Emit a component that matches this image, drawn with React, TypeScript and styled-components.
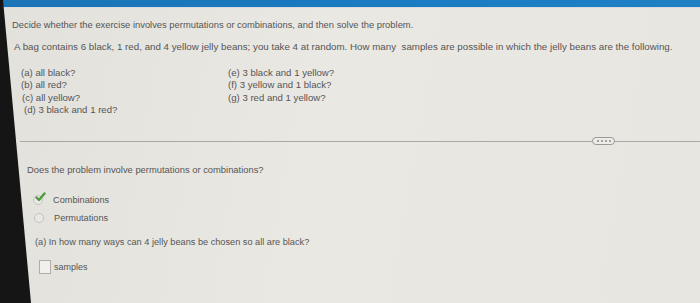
import React from "react";
import styled, { createGlobalStyle } from "styled-components";

const GlobalStyle = createGlobalStyle`
  html, body {
    margin: 0;
    padding: 0;
    background: #e7e5e0;
  }
  * {
    box-sizing: border-box;
  }
`;

// whole photographed screen
const Screen = styled.div`
  position: relative;
  width: 700px;
  height: 303px;
  overflow: hidden;
  background: linear-gradient(100deg, #e3e1dc 0%, #eae8e3 45%, #e8e6e1 100%);
  font-family: "Liberation Sans", Arial, sans-serif;
  color: #555555;
`;

const TopBar = styled.div`
  height: 8px;
  background: linear-gradient(90deg, #1b74b6, #1a7cc2 60%, #1f80c4);
  border-bottom: 1px solid #d9dde0;
`;

// dark monitor bezel at the left edge, over the page
const Bezel = styled.div`
  position: absolute;
  left: 0;
  top: 0;
  width: 34px;
  height: 303px;
  background: #151515;
  clip-path: polygon(0 0, 3px 0, 31px 303px, 0 303px);
`;

const Section = styled.div<{ $indent: number; $top: number }>`
  padding-left: ${({ $indent }) => $indent}px;
  margin-top: ${({ $top }) => $top}px;
`;

const Text = styled.p<{ $size?: number }>`
  margin: 0;
  font-size: ${({ $size }) => $size ?? 9.4}px;
  line-height: 12px;
  white-space: pre;
`;

const Parts = styled.div`
  display: grid;
  grid-template-columns: 207px auto;
  margin-top: 14px;
  padding-left: 7px;
`;

const PartColumn = styled.div`
  display: flex;
  flex-direction: column;
`;

const Part = styled.span<{ $shift?: number }>`
  font-size: 9.6px;
  line-height: 12.3px;
  padding-left: ${({ $shift }) => $shift ?? 0}px;
  white-space: pre;
`;

const Divider = styled.div`
  display: flex;
  align-items: center;
  margin-top: 21px;
  margin-left: 20px;
  height: 8px;
`;

const Rule = styled.div<{ $grow?: boolean }>`
  height: 1px;
  background: #a9a8a4;
  flex: ${({ $grow }) => ($grow ? 1 : "0 0 auto")};
  width: ${({ $grow }) => ($grow ? "auto" : "85px")};
`;

const Pill = styled.div`
  width: 23px;
  height: 8px;
  border: 1px solid #9b9a96;
  border-radius: 4px;
  display: flex;
  align-items: center;
  justify-content: center;
  gap: 2px;
  background: #eeece8;
`;

const Dot = styled.span`
  width: 2px;
  height: 2px;
  border-radius: 1px;
  background: #8a8985;
`;

const Options = styled.div`
  display: flex;
  flex-direction: column;
  gap: 6px;
  margin-top: 18px;
`;

const Option = styled.label<{ $indent: number }>`
  display: flex;
  align-items: center;
  gap: 10px;
  padding-left: ${({ $indent }) => $indent}px;
  height: 12px;
  font-size: 9.2px;
`;

const Radio = styled.span`
  position: relative;
  width: 10px;
  height: 10px;
  border-radius: 50%;
  border: 1px solid #c4c3bf;
  background: #e9e8e4;
  flex: 0 0 auto;
`;

const Check = styled.svg`
  position: absolute;
  left: 1px;
  top: -4px;
`;

const AnswerRow = styled.div`
  display: flex;
  align-items: center;
  gap: 3px;
  margin-top: 12px;
  padding-left: 39px;
`;

const AnswerBox = styled.span`
  width: 12px;
  height: 14px;
  border: 1px solid #aeada9;
  background: #f1f0ec;
`;

export default function App() {
  return (
    <Screen>
      <GlobalStyle />
      <TopBar />
      <Section $indent={12} $top={11}>
        <Text>
          Decide whether the exercise involves permutations or combinations, and then solve the problem.
        </Text>
      </Section>
      <Section $indent={14} $top={10}>
        <Text $size={9.75}>
          A bag contains 6 black, 1 red, and 4 yellow jelly beans; you take 4 at random. How many  samples are possible in which the jelly beans are the following.
        </Text>
        <Parts>
          <PartColumn>
            <Part>(a) all black?</Part>
            <Part>(b) all red?</Part>
            <Part $shift={1}>(c) all yellow?</Part>
            <Part $shift={3}>(d) 3 black and 1 red?</Part>
          </PartColumn>
          <PartColumn>
            <Part>(e) 3 black and 1 yellow?</Part>
            <Part>(f) 3 yellow and 1 black?</Part>
            <Part>(g) 3 red and 1 yellow?</Part>
          </PartColumn>
        </Parts>
      </Section>
      <Divider>
        <Rule $grow />
        <Pill>
          <Dot />
          <Dot />
          <Dot />
          <Dot />
        </Pill>
        <Rule />
      </Divider>
      <Section $indent={27} $top={19}>
        <Text $size={9.4}>Does the problem involve permutations or combinations?</Text>
      </Section>
      <Options>
        <Option $indent={33}>
          <Radio>
            <Check width="11" height="10" viewBox="0 0 11 10">
              <path d="M1.5 5.5 L4 8 L9.5 1.5" fill="none" stroke="#4f9a3c" strokeWidth="2.4" strokeLinecap="round" strokeLinejoin="round" />
            </Check>
          </Radio>
          <span>Combinations</span>
        </Option>
        <Option $indent={34}>
          <Radio />
          <span>Permutations</span>
        </Option>
      </Options>
      <Section $indent={35} $top={12}>
        <Text $size={9.2}>(a) In how many ways can 4 jelly beans be chosen so all are black?</Text>
      </Section>
      <AnswerRow>
        <AnswerBox />
        <Text $size={9}>samples</Text>
      </AnswerRow>
      <Bezel />
    </Screen>
  );
}
